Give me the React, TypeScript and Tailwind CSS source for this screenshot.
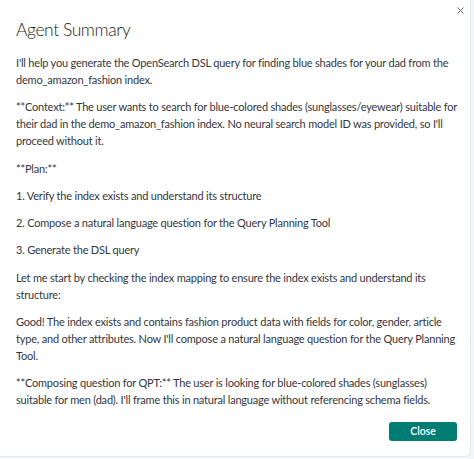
import React from 'react';

// each paragraph is split where the reference wraps its lines
const paragraphs: string[][] = [
  [
    "I'll help you generate the OpenSearch DSL query for finding blue shades for your dad from the",
    'demo_amazon_fashion index.',
  ],
  [
    '**Context:** The user wants to search for blue-colored shades (sunglasses/eyewear) suitable for',
    "their dad in the demo_amazon_fashion index. No neural search model ID was provided, so I'll",
    'proceed without it.',
  ],
  ['**Plan:**'],
  ['1. Verify the index exists and understand its structure'],
  ['2. Compose a natural language question for the Query Planning Tool'],
  ['3. Generate the DSL query'],
  [
    'Let me start by checking the index mapping to ensure the index exists and understand its',
    'structure:',
  ],
  [
    'Good! The index exists and contains fashion product data with fields for color, gender, article',
    "type, and other attributes. Now I'll compose a natural language question for the Query Planning",
    'Tool.',
  ],
  [
    '**Composing question for QPT:** The user is looking for blue-colored shades (sunglasses)',
    "suitable for men (dad). I'll frame this in natural language without referencing schema fields.",
  ],
];

export default function App() {
  return (
    <div className="w-[474px] h-[459px] bg-[#f4f5f7] overflow-hidden font-['Lato',sans-serif]">
      {/* Modal */}
      <div className="relative flex flex-col w-[471px] h-[457px] bg-white border-r border-b border-[#e3e6ec] rounded-br-md">
        <button className="absolute top-[7px] right-[6px] w-[7px] h-[7px] flex items-center justify-center text-[#69707d]">
          <svg width="7" height="7" viewBox="0 0 7 7" fill="none" stroke="currentColor" strokeWidth="1">
            <path d="M0.5 0.5l6 6M6.5 0.5l-6 6" />
          </svg>
        </button>

        <h2 className="px-4 pt-[17.5px] text-[17.5px] leading-[24px] font-light tracking-[-0.45px] text-[#1a1c21]">
          Agent Summary
        </h2>

        <div className="px-4 mt-[12.5px] text-[11px] leading-[17px] tracking-[-0.2px] text-[#343741] whitespace-nowrap">
          {paragraphs.map((lines, i) => (
            <p key={i} className={i > 0 ? 'mt-[10.3px]' : ''}>
              {lines.map((line, j) => (
                <React.Fragment key={j}>
                  {j > 0 && <br />}
                  {line}
                </React.Fragment>
              ))}
            </p>
          ))}
        </div>

        <div className="flex justify-end mt-[14px] pr-[13px]">
          <button className="w-[68px] h-[19px] rounded-[3px] bg-[#017d73] text-white text-[10.5px] font-semibold leading-[19px]">
            Close
          </button>
        </div>
      </div>
    </div>
  );
}
